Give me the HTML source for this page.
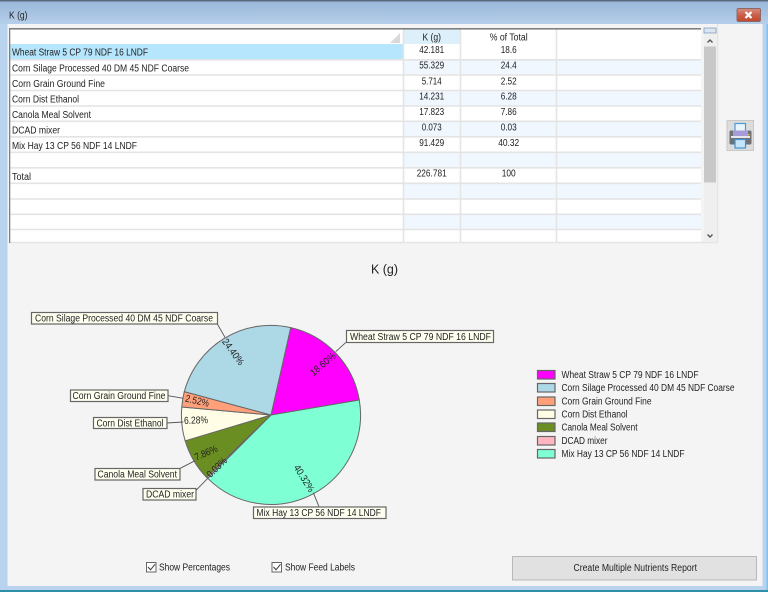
<!DOCTYPE html>
<html><head><meta charset="utf-8"><title>K (g)</title>
<style>
html,body{margin:0;padding:0;width:768px;height:592px;overflow:hidden;background:#b9d2ee}
svg{display:block;position:absolute;left:0;top:0;filter:blur(.35px)}
text{font-family:"Liberation Sans",sans-serif;font-size:10px;fill:#222}
.c{text-anchor:middle}
.l{fill:#fffff0;stroke:#666;stroke-width:1.2}
.g{stroke:#e4e4e4;stroke-width:1.6}
.ld{stroke:#555;stroke-width:.9;fill:none}
.p{stroke:#666;stroke-width:1;stroke-linejoin:round}
.s{stroke:#666;stroke-width:1.2}
</style></head><body>
<svg width="768" height="592" viewBox="0 0 768 592" xmlns="http://www.w3.org/2000/svg">
<defs>
<linearGradient id="tb" x1="0" y1="0" x2="0" y2="1"><stop offset="0" stop-color="#98b6d8"/><stop offset="1" stop-color="#b6cfea"/></linearGradient>
<linearGradient id="cl" x1="0" y1="0" x2="0" y2="1"><stop offset="0" stop-color="#d98c7c"/><stop offset=".5" stop-color="#c9604c"/><stop offset="1" stop-color="#c4452d"/></linearGradient>
</defs>
<!-- frame -->
<rect width="768" height="592" fill="#b9d2ee"/>
<rect width="768" height="24" fill="url(#tb)"/>
<rect width="768" height="1.5" fill="#59697c"/>
<rect x="766.5" y="24" width="1.5" height="568" fill="#7cc4ee"/>
<rect y="590" width="768" height="2" fill="#2e8fa8"/>
<rect x="7.5" y="24" width="755" height="562" fill="#f4f4f4"/>
<text x="9" y="18.5" textLength="18.5" lengthAdjust="spacingAndGlyphs">K (g)</text>
<!-- close -->
<rect x="737" y="8.5" width="23.5" height="13" rx="1.5" fill="url(#cl)" stroke="#8a6a66"/>
<path d="M745.5 12l6 6M751.5 12l-6 6" stroke="#fff" stroke-width="2.2"/>
<!-- grid -->
<rect x="9" y="28" width="692" height="215" fill="#fff"/>
<rect x="403" y="29" width="57.500" height="15" fill="#ddeffa"/>
<rect x="10" y="44" width="393" height="15.500" fill="#b5e6fd"/>
<g fill="#f0f7ff">
<rect x="404" y="60" width="297" height="15"/>
<rect x="404" y="91" width="297" height="15"/>
<rect x="404" y="122" width="297" height="15"/>
<rect x="404" y="153" width="297" height="15"/>
<rect x="404" y="184" width="297" height="15"/>
<rect x="404" y="215" width="297" height="15"/>
</g>
<g class="g">
<path d="M10 59.800H701M10 75H701M10 90.500H701M10 106H701M10 121.300H701M10 136.800H701M10 152.300H701M10 167.800H701M10 183.300H701M10 199H701M10 214.300H701M10 229.500H701M9 242.500H718"/>
<path d="M403.500 29V242M460.500 29V242M556.500 29V242M717.500 24V242"/>
</g>
<rect x="9" y="28" width="692" height="1.600" fill="#808080"/>
<rect x="9" y="28" width="1.300" height="215" fill="#808080"/>
<path d="M400 33v10h-10z" fill="#d9d9d9"/>
<!-- scrollbar -->
<rect x="704" y="34" width="12" height="208" fill="#efefef"/>
<rect x="704" y="28" width="12" height="5" fill="#dce6f2" stroke="#7f9db9" stroke-width=".8"/>
<rect x="704" y="46.500" width="12" height="136" fill="#c8c8c8"/>
<path d="M707.500 42.500l2.500-2.500 2.500 2.500" fill="none" stroke="#555" stroke-width="1.400"/>
<path d="M707.500 234.500l2.500 2.500 2.500-2.500" fill="none" stroke="#555" stroke-width="1.400"/>
<!-- grid text -->
<text x="12" y="55.500" textLength="136" lengthAdjust="spacingAndGlyphs">Wheat Straw 5 CP 79 NDF 16 LNDF</text>
<text x="12" y="71.500" textLength="177" lengthAdjust="spacingAndGlyphs">Corn Silage Processed 40 DM 45 NDF Coarse</text>
<text x="12" y="87" textLength="93" lengthAdjust="spacingAndGlyphs">Corn Grain Ground Fine</text>
<text x="12" y="102.500" textLength="67" lengthAdjust="spacingAndGlyphs">Corn Dist Ethanol</text>
<text x="12" y="118" textLength="79" lengthAdjust="spacingAndGlyphs">Canola Meal Solvent</text>
<text x="12" y="133.500" textLength="48" lengthAdjust="spacingAndGlyphs">DCAD mixer</text>
<text x="12" y="149" textLength="125" lengthAdjust="spacingAndGlyphs">Mix Hay 13 CP 56 NDF 14 LNDF</text>
<text x="12" y="180" textLength="19" lengthAdjust="spacingAndGlyphs">Total</text>
<text class="c" x="431.700" y="40.500" textLength="18.500" lengthAdjust="spacingAndGlyphs">K (g)</text>
<text class="c" x="508.700" y="40.500" textLength="38" lengthAdjust="spacingAndGlyphs">% of Total</text>
<text class="c" x="431.700" y="53" textLength="25" lengthAdjust="spacingAndGlyphs">42.181</text><text class="c" x="508.700" y="53" textLength="16" lengthAdjust="spacingAndGlyphs">18.6</text>
<text class="c" x="431.700" y="68.500" textLength="25" lengthAdjust="spacingAndGlyphs">55.329</text><text class="c" x="508.700" y="68.500" textLength="16" lengthAdjust="spacingAndGlyphs">24.4</text>
<text class="c" x="431.700" y="84.500" textLength="20" lengthAdjust="spacingAndGlyphs">5.714</text><text class="c" x="508.700" y="84.500" textLength="16" lengthAdjust="spacingAndGlyphs">2.52</text>
<text class="c" x="431.700" y="99.500" textLength="25" lengthAdjust="spacingAndGlyphs">14.231</text><text class="c" x="508.700" y="99.500" textLength="16" lengthAdjust="spacingAndGlyphs">6.28</text>
<text class="c" x="431.700" y="115" textLength="25" lengthAdjust="spacingAndGlyphs">17.823</text><text class="c" x="508.700" y="115" textLength="16" lengthAdjust="spacingAndGlyphs">7.86</text>
<text class="c" x="431.700" y="130.500" textLength="20" lengthAdjust="spacingAndGlyphs">0.073</text><text class="c" x="508.700" y="130.500" textLength="16" lengthAdjust="spacingAndGlyphs">0.03</text>
<text class="c" x="431.700" y="146" textLength="25" lengthAdjust="spacingAndGlyphs">91.429</text><text class="c" x="508.700" y="146" textLength="21" lengthAdjust="spacingAndGlyphs">40.32</text>
<text class="c" x="431.700" y="176.500" textLength="30" lengthAdjust="spacingAndGlyphs">226.781</text><text class="c" x="508.700" y="176.500" textLength="14" lengthAdjust="spacingAndGlyphs">100</text>
<!-- printer -->
<rect x="727" y="120.500" width="26.500" height="30" fill="#dcdcdc" stroke="#c8c8c8"/>
<rect x="735" y="123.500" width="10.500" height="9" fill="#eaf4fc" stroke="#4a9ad8" stroke-width="1.200"/>
<path d="M731 130.500h19q1.500 0 1.500 1.500v11q0 1.500-1.500 1.500h-19q-1.500 0-1.500-1.500v-11q0-1.500 1.500-1.500z" fill="#6f7176"/>
<rect x="733" y="130.500" width="15" height="5.500" fill="#a79ad8"/>
<rect x="731" y="136" width="19" height="2" fill="#e6e6ee"/>
<rect x="735" y="139.500" width="10.500" height="8.500" fill="#c4e4fa" stroke="#3f93d6" stroke-width="1.200"/>
<rect x="748" y="134" width="1.500" height="1.500" fill="#d8c040"/>
<!-- chart title -->
<text x="371" y="273.500" textLength="27" lengthAdjust="spacingAndGlyphs" style="font-size:13px">K (g)</text>
<!-- pie -->
<g class="p">
<path d="M271 415L290.700 327.600A89.600 89.600 0 0 1 359.300 400Z" fill="#ff00ff"/>
<path d="M271 415L359.300 400A89.600 89.600 0 0 1 207.700 478.300Z" fill="#7fffd4"/>
<path d="M271 415L207.700 478.300L206.500 477.300Z" fill="#ffb6c1"/>
<path d="M271 415L206.500 477.300A89.600 89.600 0 0 1 185.200 440.800Z" fill="#6b8e23"/>
<path d="M271 415L185.200 440.800A89.600 89.600 0 0 1 181.800 407Z" fill="#fffde6"/>
<path d="M271 415L181.800 407A89.600 89.600 0 0 1 184.300 391.600Z" fill="#ffa07a"/>
<path d="M271 415L184.300 391.600A89.600 89.600 0 0 1 290.700 327.600Z" fill="#add8e6"/>
</g>
<!-- pie pct labels -->
<g>
<text class="c" transform="translate(325 366.700) rotate(-40)" textLength="30" lengthAdjust="spacingAndGlyphs">18.60%</text>
<text class="c" transform="translate(230.500 353.800) rotate(54)" textLength="30" lengthAdjust="spacingAndGlyphs">24.40%</text>
<text class="c" transform="translate(196.500 404.100) rotate(13)" textLength="24" lengthAdjust="spacingAndGlyphs">2.52%</text>
<text class="c" transform="translate(196.100 423.500) rotate(-2)" textLength="24" lengthAdjust="spacingAndGlyphs">6.28%</text>
<text class="c" transform="translate(207.400 455.900) rotate(-24)" textLength="24" lengthAdjust="spacingAndGlyphs">7.86%</text>
<text class="c" transform="translate(219.100 469.800) rotate(-44)" textLength="24" lengthAdjust="spacingAndGlyphs">0.03%</text>
<text class="c" transform="translate(301.300 480.200) rotate(58)" textLength="30" lengthAdjust="spacingAndGlyphs">40.32%</text>
</g>
<!-- leaders -->
<path class="ld" d="M335.700 351.700L346 342.300M225 337.300L217.300 324M168 395.700L183.300 398.300M166.700 423L183.300 422M180.300 468.300L195 460.700M195.700 490.700L208.300 477.700M313.300 492.700L319 506.700"/>
<!-- callouts -->
<rect class="l" x="346.500" y="330.500" width="147" height="12"/>
<text x="350" y="340" textLength="141" lengthAdjust="spacingAndGlyphs">Wheat Straw 5 CP 79 NDF 16 LNDF</text>
<rect class="l" x="31.500" y="312.500" width="186" height="11.500"/>
<text x="35" y="321.500" textLength="178" lengthAdjust="spacingAndGlyphs">Corn Silage Processed 40 DM 45 NDF Coarse</text>
<rect class="l" x="70.500" y="390" width="97.500" height="11.500"/>
<text x="72.500" y="399" textLength="93" lengthAdjust="spacingAndGlyphs">Corn Grain Ground Fine</text>
<rect class="l" x="93.500" y="417.500" width="73.500" height="11"/>
<text x="96.500" y="426.500" textLength="67" lengthAdjust="spacingAndGlyphs">Corn Dist Ethanol</text>
<rect class="l" x="95" y="468.500" width="85" height="11.500"/>
<text x="97.500" y="477.500" textLength="79.500" lengthAdjust="spacingAndGlyphs">Canola Meal Solvent</text>
<rect class="l" x="143" y="488.500" width="53" height="11.500"/>
<text x="146" y="497.500" textLength="48" lengthAdjust="spacingAndGlyphs">DCAD mixer</text>
<rect class="l" x="253.500" y="507" width="132.500" height="11.500"/>
<text x="256.500" y="516" textLength="124.500" lengthAdjust="spacingAndGlyphs">Mix Hay 13 CP 56 NDF 14 LNDF</text>
<!-- legend -->
<rect class="s" x="537.500" y="370.500" width="17.500" height="8.500" fill="#ff00ff"/>
<rect class="s" x="537.500" y="383.500" width="17.500" height="8.500" fill="#add8e6"/>
<rect class="s" x="537.500" y="397" width="17.500" height="8.500" fill="#ffa07a"/>
<rect class="s" x="537.500" y="410" width="17.500" height="8.500" fill="#fffde6"/>
<rect class="s" x="537.500" y="423" width="17.500" height="8.500" fill="#6b8e23"/>
<rect class="s" x="537.500" y="436.500" width="17.500" height="8.500" fill="#ffb6c1"/>
<rect class="s" x="537.500" y="449.500" width="17.500" height="8.500" fill="#7fffd4"/>
<text x="561.500" y="378" textLength="137" lengthAdjust="spacingAndGlyphs">Wheat Straw 5 CP 79 NDF 16 LNDF</text>
<text x="561.500" y="391" textLength="173" lengthAdjust="spacingAndGlyphs">Corn Silage Processed 40 DM 45 NDF Coarse</text>
<text x="561.500" y="404.500" textLength="90" lengthAdjust="spacingAndGlyphs">Corn Grain Ground Fine</text>
<text x="561.500" y="417.500" textLength="66" lengthAdjust="spacingAndGlyphs">Corn Dist Ethanol</text>
<text x="561.500" y="430.500" textLength="76" lengthAdjust="spacingAndGlyphs">Canola Meal Solvent</text>
<text x="561.500" y="444" textLength="46" lengthAdjust="spacingAndGlyphs">DCAD mixer</text>
<text x="561.500" y="457" textLength="123" lengthAdjust="spacingAndGlyphs">Mix Hay 13 CP 56 NDF 14 LNDF</text>
<!-- checkboxes -->
<rect x="146.500" y="562.500" width="9.500" height="9.500" fill="#fff" stroke="#666"/>
<path d="M148 567l2.500 2.800 4.500-5.500" fill="none" stroke="#444" stroke-width="1.100"/>
<text x="159" y="570.500" textLength="71" lengthAdjust="spacingAndGlyphs">Show Percentages</text>
<rect x="272" y="562.500" width="9.500" height="9.500" fill="#fff" stroke="#666"/>
<path d="M273.500 567l2.500 2.800 4.500-5.500" fill="none" stroke="#444" stroke-width="1.100"/>
<text x="285" y="570.500" textLength="70" lengthAdjust="spacingAndGlyphs">Show Feed Labels</text>
<!-- button -->
<rect x="512.500" y="556.500" width="244" height="23.500" fill="#e1e1e1" stroke="#b8b8b8"/>
<text x="573.500" y="571" textLength="123.500" lengthAdjust="spacingAndGlyphs">Create Multiple Nutrients Report</text>
</svg>
</body></html>
